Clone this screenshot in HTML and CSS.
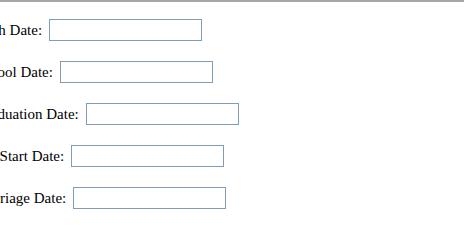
FILE: index.html
```html
<!DOCTYPE html>
<html lang="en">

<head>
    <meta charset="UTF-8">
    <title>Dates</title>
    <link rel="stylesheet" href="styles.css">
</head>

<body>
    <div class="topbar"></div>

    <!-- date fields -->
    <form action="#" method="get" class="date-form">
        <div class="row">
            <label for="birth">Birth Date:</label>
            <input type="text" id="birth" name="birth">
        </div>
        <div class="row">
            <label for="school">School Date:</label>
            <input type="text" id="school" name="school">
        </div>
        <div class="row">
            <label for="graduation">Graduation Date:</label>
            <input type="text" id="graduation" name="graduation">
        </div>
        <div class="row">
            <label for="job">Job Start Date:</label>
            <input type="text" id="job" name="job">
        </div>
        <div class="row">
            <label for="marriage">Marriage Date:</label>
            <input type="text" id="marriage" name="marriage">
        </div>
    </form>
</body>

</html>
```

FILE: styles.css
```css
body {
    margin: 0;
    background-color: #fff;
    font-family: "Liberation Serif", "Times New Roman", serif;
    font-size: 15px;
    color: #000;
}

/* grey line at the top */
.topbar {
    height: 2px;
    background-color: #a6a6a6;
}

.date-form {
    display: flex;
    flex-direction: column;
    gap: 20px;
    padding-top: 17px;
    /* the page is scrolled a little to the right */
    margin-left: -25px;
}

.row {
    display: flex;
    align-items: center;
    height: 22px;
}

.row label {
    margin-right: 7px;
    white-space: nowrap;
}

.row input {
    box-sizing: border-box;
    width: 153px;
    height: 22px;
    margin: 0;
    padding: 1px 2px;
    border: 1px solid #7f9db9;
    background-color: #fff;
}
```
